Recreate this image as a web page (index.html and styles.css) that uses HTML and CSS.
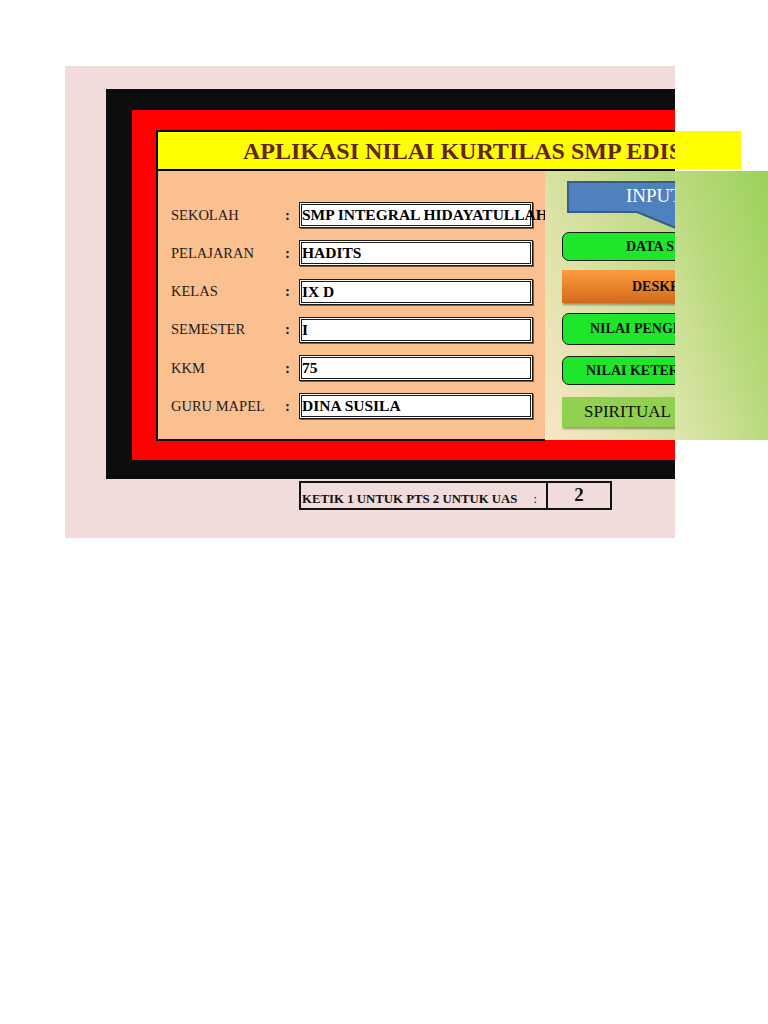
FILE: index.html
```html
<!DOCTYPE html>
<html>
<head>
<meta charset="utf-8">
<link rel="stylesheet" href="styles.css">
</head>
<body>
<div class="page">
  <div class="sheet">
    <div class="frame-black">
      <div class="frame-red">
        <div class="title">APLIKASI NILAI KURTILAS SMP EDISI REVISI</div>
        <div class="body-row">
          <div class="form">
            <div class="row"><span class="lbl">SEKOLAH</span><span class="colon">:</span><span class="field">SMP INTEGRAL HIDAYATULLAH</span></div>
            <div class="row"><span class="lbl">PELAJARAN</span><span class="colon">:</span><span class="field">HADITS</span></div>
            <div class="row"><span class="lbl">KELAS</span><span class="colon">:</span><span class="field">IX D</span></div>
            <div class="row"><span class="lbl">SEMESTER</span><span class="colon">:</span><span class="field">I</span></div>
            <div class="row"><span class="lbl">KKM</span><span class="colon">:</span><span class="field">75</span></div>
            <div class="row"><span class="lbl">GURU MAPEL</span><span class="colon">:</span><span class="field">DINA SUSILA</span></div>
          </div>
          <div class="menu">
            <svg class="callout" width="160" height="50" viewBox="0 0 160 50">
              <path d="M1,1 H159 V31 H118 L114,49 L70,31 H1 Z" fill="#4f81bd" stroke="#385d8a" stroke-width="2"/>
              <text x="59" y="21" class="callout-text">INPUT DATA</text>
            </svg>
            <div class="btn green b-data">DATA SISWA</div>
            <div class="btn orange b-desk">DESKRIPSI</div>
            <div class="btn green b-peng">NILAI PENGETAHUAN</div>
            <div class="btn green b-kete">NILAI KETERAMPILAN</div>
            <div class="btn lime b-spir">SPIRITUAL</div>
          </div>
        </div>
      </div>
    </div>
    <div class="pts-box">
      <div class="pts-label">KETIK 1 UNTUK PTS 2 UNTUK UAS<span class="pts-colon">:</span></div>
      <div class="pts-value">2</div>
    </div>
  </div>
  <div class="overflow-col">
    <div class="yellow-strip"></div>
    <div class="green-panel"></div>
  </div>
</div>
</body>
</html>
```
FILE: styles.css
```css
html, body {
  margin: 0;
  padding: 0;
  background: #ffffff;
}
.page {
  display: flex;
  align-items: flex-start;
  padding: 66px 0 0 65px;
  font-family: "Liberation Serif", "Times New Roman", serif;
}
.sheet {
  width: 610px;
  height: 472px;
  background: #f2dcdb;
  overflow: hidden;
  flex: none;
}
.frame-black {
  margin: 23px 0 0 41px;
  width: 720px;
  background: #0d0d0d;
  padding: 21px 0 19px 26px;
  box-sizing: border-box;
}
.frame-red {
  background: #ff0000;
  padding: 20px 0 19px 24px;
}
.title {
  height: 37px;
  line-height: 38px;
  background: #ffff00;
  border: 2px solid #000;
  border-right: none;
  padding-left: 85px;
  font-size: 24px;
  font-weight: bold;
  color: #632523;
  white-space: nowrap;
  overflow: hidden;
}
.body-row {
  display: flex;
  height: 270px;
}
.form {
  width: 374px;
  height: 237px;
  flex: none;
  background: #fac090;
  border-left: 2px solid #111;
  border-bottom: 2px solid #111;
  padding: 31px 0 0 13px;
  display: flex;
  flex-direction: column;
  gap: 12.3px;
  overflow: hidden;
}
.row {
  display: flex;
  align-items: center;
  height: 26px;
  flex: none;
}
.lbl {
  width: 114px;
  font-size: 14.5px;
  color: #1c1c1c;
  flex: none;
}
.colon {
  width: 14px;
  font-size: 15px;
  font-weight: bold;
  color: #1c1c1c;
  flex: none;
}
.field {
  width: 234px;
  height: 26px;
  box-sizing: border-box;
  background: #fff;
  border: 3px double #1a1a1a;
  box-shadow: 1px 1px 0 #7a5a44;
  font-size: 15.5px;
  font-weight: bold;
  color: #000;
  line-height: 20px;
  white-space: nowrap;
  flex: none;
}
.menu {
  width: 130px;
  height: 269px;
  flex: none;
  background: linear-gradient(to bottom left, #b4d57a 0%, #d7e2a2 50%, #f9e6c6 100%);
  padding: 10px 0 0 17px;
  box-sizing: border-box;
  display: flex;
  flex-direction: column;
}
.callout {
  display: block;
  margin-left: 5px;
  flex: none;
}
.callout-text {
  font-family: "Liberation Serif", "Times New Roman", serif;
  font-size: 19px;
  fill: #ffffff;
}
.btn {
  width: 200px;
  box-sizing: border-box;
  font-size: 14px;
  font-weight: bold;
  color: #0d0d0d;
  white-space: nowrap;
  display: flex;
  align-items: center;
  flex: none;
}
.green {
  background: #1ee62b;
  border: 1.5px solid #1a1a1a;
  border-radius: 7px;
}
.orange {
  background: linear-gradient(#fb9c3f, #e07a25 70%, #cf6b1c);
  box-shadow: 1px 2px 2px rgba(0,0,0,0.35);
}
.lime {
  background: #92d050;
  font-weight: normal;
  font-size: 17px;
  box-shadow: 1px 2px 2px rgba(0,0,0,0.35);
}
.b-data {
  margin-top: 1px;
  height: 29px;
  padding-left: 63px;
}
.b-desk {
  margin-top: 9px;
  height: 33px;
  padding-left: 70px;
}
.b-peng {
  margin-top: 10px;
  height: 32px;
  padding-left: 27px;
}
.b-kete {
  margin-top: 11px;
  height: 29px;
  padding-left: 23px;
}
.b-spir {
  margin-top: 12px;
  height: 30px;
  padding-left: 22px;
}
.pts-box {
  display: flex;
  margin: 2px 0 0 234px;
  width: 313px;
  height: 29px;
  box-sizing: border-box;
  border: 2px solid #111;
}
.pts-label {
  width: 244px;
  border-right: 2px solid #111;
  font-size: 12.8px;
  font-weight: bold;
  color: #111;
  display: flex;
  align-items: flex-end;
  padding-left: 1px;
  padding-bottom: 1px;
  white-space: nowrap;
}
.pts-colon {
  margin-left: 16px;
  font-weight: normal;
}
.pts-value {
  flex: 1;
  text-align: center;
  font-size: 19px;
  font-weight: bold;
  line-height: 24px;
  color: #111;
}
.overflow-col {
  width: 93px;
  flex: none;
  display: flex;
  flex-direction: column;
}
.yellow-strip {
  margin-top: 65px;
  width: 66px;
  height: 38px;
  background: #ffff00;
}
.green-panel {
  margin-top: 2px;
  width: 93px;
  height: 269px;
  background: linear-gradient(to bottom left, #9bd25a 0%, #b7d97a 45%, #dfe6ad 100%);
}
```
